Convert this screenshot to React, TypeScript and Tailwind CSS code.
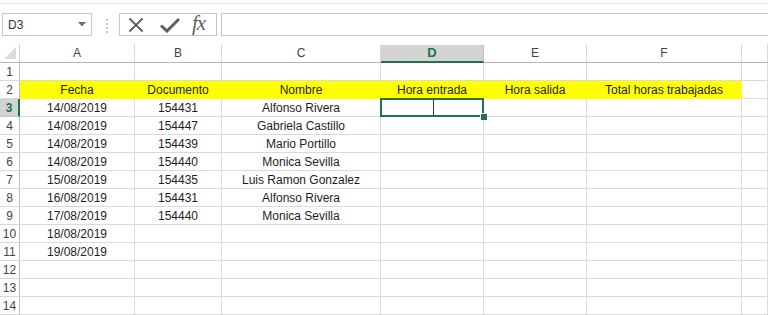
const COLS = ["w-[115px]", "w-[87px]", "w-[159px]", "w-[103px]", "w-[103px]", "w-[155px]", "flex-1"];
const LETTERS = ["A", "B", "C", "D", "E", "F", ""];

const HEADERS = ["Fecha", "Documento", "Nombre", "Hora entrada", "Hora salida", "Total horas trabajadas"];

const DATA: string[][] = [
  ["14/08/2019", "154431", "Alfonso Rivera"],
  ["14/08/2019", "154447", "Gabriela Castillo"],
  ["14/08/2019", "154439", "Mario Portillo"],
  ["14/08/2019", "154440", "Monica Sevilla"],
  ["15/08/2019", "154435", "Luis Ramon Gonzalez"],
  ["16/08/2019", "154431", "Alfonso Rivera"],
  ["17/08/2019", "154440", "Monica Sevilla"],
  ["18/08/2019", "", ""],
  ["19/08/2019", "", ""],
  ["", "", ""],
  ["", "", ""],
  ["", "", ""],
];

function RowHeader({ n, active }: { n: number; active?: boolean }) {
  return (
    <div
      className={
        active
          ? "w-[20px] shrink-0 flex items-center justify-center bg-[#d3d3d3] text-[#217346] font-bold border-r-2 border-r-[#217346] border-b border-b-[#c6c6c6]"
          : "w-[20px] shrink-0 flex items-center justify-center text-[#444] border-r border-r-[#bdbdbd] border-b border-b-[#d9d9d9]"
      }
    >
      {n}
    </div>
  );
}

function Cell({ col, text, yellow, selected }: { col: number; text?: string; yellow?: boolean; selected?: boolean }) {
  return (
    <div
      className={
        COLS[col] +
        " shrink-0 relative flex items-center justify-center whitespace-nowrap border-r border-b " +
        (yellow ? "bg-[#ffff00] border-[#ffff00]" : "border-[#dadada]")
      }
    >
      {text}
      {selected && (
        <>
          <div className="absolute left-[-1px] top-[-1px] right-[-1px] bottom-[-1px] border-2 border-[#217346]" />
          <div className="absolute left-[52px] top-[1px] bottom-[1px] w-px bg-[#3a3a3a]" />
          <div className="absolute right-[-4px] bottom-[-4px] w-[7px] h-[7px] bg-[#217346] border-l border-t border-white z-10" />
        </>
      )}
    </div>
  );
}

export default function App() {
  return (
    <div className="w-[768px] h-[315px] overflow-hidden bg-white text-[12px] text-[#1e1e1e] font-['Liberation_Sans',Arial,sans-serif]">
      {/* top strip */}
      <div className="h-[4px] border-b border-[#e2e2e2]" />

      {/* formula bar */}
      <div className="h-[40px] flex items-start pt-[9px]">
        <div className="ml-[2px] w-[90px] h-[23px] border border-[#c6c6c6] flex items-center justify-between pl-[5px] pr-[5px] text-[#333]">
          <span>D3</span>
          <svg width="8" height="5" viewBox="0 0 8 5">
            <path d="M0 0 L8 0 L4 4.5 Z" fill="#6d6d6d" />
          </svg>
        </div>
        <div className="ml-[14px] mt-[6px] flex flex-col gap-[2px]">
          <div className="w-[2px] h-[2px] bg-[#c4c4c4]" />
          <div className="w-[2px] h-[2px] bg-[#c4c4c4]" />
          <div className="w-[2px] h-[2px] bg-[#c4c4c4]" />
          <div className="w-[2px] h-[2px] bg-[#c4c4c4]" />
        </div>
        <div className="ml-[11px] w-[98px] h-[23px] border border-[#c6c6c6] flex items-center pl-[8px]">
          <svg width="16" height="16" viewBox="0 0 16 16">
            <path d="M1.5 1.5 L14.5 14.5 M14.5 1.5 L1.5 14.5" stroke="#5f5f5f" strokeWidth="1.8" fill="none" />
          </svg>
          <svg width="20" height="16" viewBox="0 0 20 16" className="ml-[16px]">
            <path d="M1 8.5 L7 14 L19 2" stroke="#5f5f5f" strokeWidth="3" fill="none" />
          </svg>
          <span className="ml-[12px] mt-[-2px] italic text-[21px] leading-none text-[#5f5f5f] font-['Liberation_Serif',serif] tracking-[-1px]">
            fx
          </span>
        </div>
        <div className="ml-[4px] flex-1 h-[23px] border border-[#c6c6c6] border-r-0" />
      </div>

      {/* column headers */}
      <div className="h-[19px] flex border-b border-[#b6b6b6]">
        <div className="w-[20px] shrink-0 relative border-r border-[#d4d4d4]">
          <svg width="12" height="12" viewBox="0 0 12 12" className="absolute right-[3px] bottom-[3px]">
            <path d="M12 0 L12 12 L0 12 Z" fill="#dcdcdc" />
          </svg>
        </div>
        {LETTERS.map((l, i) =>
          l === "D" ? (
            <div
              key={i}
              className={COLS[i] + " shrink-0 flex items-center justify-center bg-[#d3d3d3] text-[#217346] font-bold text-[13px] border-r border-[#bdbdbd] border-b-2 border-b-[#217346] mt-[1px] mb-[-1px]"}
            >
              {l}
            </div>
          ) : (
            <div key={i} className={COLS[i] + " shrink-0 flex items-center justify-center text-[#444] border-r border-[#d8d8d8]"}>
              {l}
            </div>
          )
        )}
      </div>

      {/* row 1 */}
      <div className="h-[18px] flex">
        <RowHeader n={1} />
        {LETTERS.map((_, i) => (
          <Cell key={i} col={i} />
        ))}
      </div>

      {/* row 2 */}
      <div className="h-[18px] flex">
        <RowHeader n={2} />
        {LETTERS.map((_, i) => (
          <Cell key={i} col={i} text={HEADERS[i]} yellow={i < 6} />
        ))}
      </div>

      {/* data rows */}
      {DATA.map((row, r) => (
        <div key={r} className="h-[18px] flex">
          <RowHeader n={r + 3} active={r === 0} />
          {LETTERS.map((_, i) => (
            <Cell key={i} col={i} text={row[i]} selected={r === 0 && i === 3} />
          ))}
        </div>
      ))}
    </div>
  );
}
